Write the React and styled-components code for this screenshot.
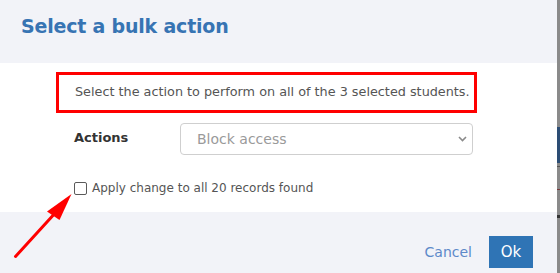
import React, { useState } from "react";
import styled, { createGlobalStyle } from "styled-components";

const GlobalStyle = createGlobalStyle`
  html, body {
    margin: 0;
    padding: 0;
    background: #8a8a8a;
  }
  body {
    font-family: "DejaVu Sans", "Liberation Sans", sans-serif;
  }
`;

const Page = styled.div`
  display: flex;
  width: 560px;
  height: 273px;
  overflow: hidden;
`;

const Modal = styled.div`
  position: relative;
  width: 557px;
  flex: none;
  display: flex;
  flex-direction: column;
  background: #ffffff;
`;

const Header = styled.div`
  height: 63px;
  box-sizing: border-box;
  padding: 14px 21px 0;
  background: #f2f3f8;
`;

const Title = styled.h2`
  margin: 0;
  font-size: 19px;
  line-height: 24px;
  font-weight: bold;
  letter-spacing: -0.2px;
  color: #3774b3;
`;

const Body = styled.div`
  height: 149px;
  box-sizing: border-box;
  padding: 9px 0 0 56px;
  display: flex;
  flex-direction: column;
`;

const Highlight = styled.div`
  width: 421px;
  height: 41px;
  box-sizing: border-box;
  border: 3px solid #ff0000;
  padding: 0 0 2px 16px;
  display: flex;
  align-items: center;
  font-size: 12.8px;
  color: #555555;
`;

const FormRow = styled.div`
  display: flex;
  align-items: center;
  margin: ${(p) => p.$top}px 0 0 18px;
`;

const Label = styled.label`
  width: 106px;
  flex: none;
  font-size: 13px;
  font-weight: bold;
  color: #333333;
  padding-bottom: 3px;
`;

const SelectWrap = styled.div`
  position: relative;
  width: 293px;
  height: 32px;
`;

const Select = styled.select`
  appearance: none;
  width: 100%;
  height: 100%;
  box-sizing: border-box;
  border: 1px solid #cfcfcf;
  border-radius: 4px;
  background: #ffffff;
  padding: 0 30px 0 16px;
  font-family: "DejaVu Sans", "Liberation Sans", sans-serif;
  font-size: 14px;
  color: #9a9a9a;
  outline: none;
`;

const Chevron = styled.svg`
  position: absolute;
  right: 6px;
  top: 13px;
  pointer-events: none;
`;

const CheckLabel = styled.label`
  display: flex;
  align-items: center;
  gap: 5px;
  font-size: 12px;
  color: #555555;
`;

const Box = styled.input`
  appearance: none;
  width: 13px;
  height: 13px;
  margin: 0;
  box-sizing: border-box;
  border: 1px solid #5a5a5a;
  border-radius: 2px;
  background: #ffffff;
  &:checked {
    background: #2f74b5;
    border-color: #2f74b5;
  }
`;

const Footer = styled.div`
  flex: 1;
  background: #f2f3f8;
  display: flex;
  justify-content: flex-end;
  align-items: flex-start;
  gap: 17px;
  padding: 24px 24px 0 0;
`;

const CancelButton = styled.button`
  border: none;
  background: none;
  padding: 0;
  height: 32px;
  font-family: "DejaVu Sans", "Liberation Sans", sans-serif;
  font-size: 14px;
  color: #5d89c9;
  cursor: pointer;
`;

const OkButton = styled.button`
  border: none;
  width: 44px;
  height: 32px;
  padding: 0;
  background: #2f74b5;
  color: #ffffff;
  font-family: "DejaVu Sans", "Liberation Sans", sans-serif;
  font-size: 15px;
  cursor: pointer;
`;

const Annotation = styled.svg`
  position: absolute;
  left: 0;
  top: 0;
  pointer-events: none;
`;

const Strip = styled.div`
  flex: 1;
  display: flex;
  flex-direction: column;
  background: #8a8a8a;
`;

const Mark = styled.div`
  height: ${(p) => p.$h}px;
  margin-top: ${(p) => p.$top}px;
  background: ${(p) => p.$c};
`;

export default function App() {
  const [all, setAll] = useState(false);

  return (
    <>
      <GlobalStyle />
      <Page>
        <Modal>
          <Header>
            <Title>Select a bulk action</Title>
          </Header>
          <Body>
            <Highlight>
              Select the action to perform on all of the 3 selected students.
            </Highlight>
            <FormRow $top={10}>
              <Label htmlFor="bulk-action">Actions</Label>
              <SelectWrap>
                <Select id="bulk-action" defaultValue="block">
                  <option value="block">Block access</option>
                  <option value="unblock">Unblock access</option>
                </Select>
                <Chevron width="9" height="6" viewBox="0 0 9 6">
                  <path
                    d="M1 1l3.5 3.5L8 1"
                    fill="none"
                    stroke="#8a8a8a"
                    strokeWidth="1.6"
                  />
                </Chevron>
              </SelectWrap>
            </FormRow>
            <FormRow $top={26}>
              <CheckLabel>
                <Box
                  type="checkbox"
                  checked={all}
                  onChange={(e) => setAll(e.target.checked)}
                />
                Apply change to all 20 records found
              </CheckLabel>
            </FormRow>
          </Body>
          <Footer>
            <CancelButton>Cancel</CancelButton>
            <OkButton>Ok</OkButton>
          </Footer>
          <Annotation width="557" height="273" viewBox="0 0 557 273">
            <line
              x1="15.5"
              y1="256.5"
              x2="57"
              y2="211"
              stroke="#ff0000"
              strokeWidth="3"
              strokeLinecap="round"
            />
            <polygon points="71.5,194 47,211.5 59.5,220" fill="#ff0000" />
          </Annotation>
        </Modal>
        <Strip>
          <Mark $top={127} $h={36} $c="#2c4d74" />
          <Mark $top={3} $h={1} $c="#555555" />
          <Mark $top={22} $h={1} $c="#7a3a3a" />
          <Mark $top={25} $h={3} $c="#333333" />
        </Strip>
      </Page>
    </>
  );
}
